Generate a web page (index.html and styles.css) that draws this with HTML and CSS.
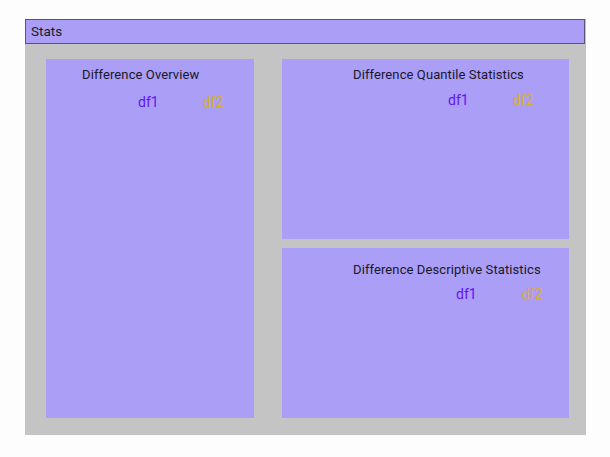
FILE: index.html
```html
<!DOCTYPE html>
<html lang="en">
<head>
    <meta charset="UTF-8">
    <meta name="viewport" content="width=device-width, initial-scale=1.0">
    <title>Stats</title>
    <link rel="stylesheet" href="styles.css">
</head>
<body>
    <div class="stats">
        <div class="stats-header">Stats</div>
        <div class="stats-body">
            <div class="panel panel-overview">
                <div class="panel-title">Difference Overview</div>
                <div class="legend">
                    <span class="df1">df1</span>
                    <span class="df2">df2</span>
                </div>
            </div>
            <div class="side">
                <div class="panel panel-quantile">
                    <div class="panel-title">Difference Quantile Statistics</div>
                    <div class="legend">
                        <span class="df1">df1</span>
                        <span class="df2">df2</span>
                    </div>
                </div>
                <div class="panel panel-descriptive">
                    <div class="panel-title">Difference Descriptive Statistics</div>
                    <div class="legend">
                        <span class="df1">df1</span>
                        <span class="df2">df2</span>
                    </div>
                </div>
            </div>
        </div>
    </div>
</body>
</html>
```

FILE: styles.css
```css
body {
    font-family: 'Roboto', 'Liberation Sans', sans-serif;
    margin: 0;
    padding: 17px 24px 0 25px;
    background: #fdfdfd;
    color: #222;
}
.stats {
    background: #c4c4c4;
    width: 561px;
}
.stats-header {
    margin: 2px 1px 0 0;
    background: #ab9ef7;
    border: 1px solid #5a5472;
    height: 23px;
    line-height: 23px;
    padding-left: 5px;
    font-size: 13.5px;
    color: #1a1a26;
}
.stats-body {
    display: grid;
    grid-template-columns: 208px 287px;
    column-gap: 28px;
    padding: 15px 17px 17px 21px;
}
.side {
    display: flex;
    flex-direction: column;
    gap: 9px;
}
.panel {
    background: #ab9ef7;
    box-sizing: border-box;
}
.panel-title {
    font-size: 13px;
    line-height: 16px;
    letter-spacing: 0.1px;
    color: #18182a;
    white-space: nowrap;
}
.legend {
    display: flex;
    font-size: 14px;
    line-height: 16px;
}
.df1 {
    color: #6214f0;
}
.df2 {
    color: #d9ad30;
}
.panel-overview {
    height: 359px;
    padding: 8px 0 0 36px;
}
.panel-overview .legend {
    margin: 11px 0 0 56px;
    gap: 44px;
}
.panel-quantile {
    height: 180px;
    padding: 8px 0 0 71px;
}
.panel-quantile .legend {
    margin: 9px 0 0 95px;
    gap: 44px;
}
.panel-descriptive {
    height: 170px;
    padding: 14px 0 0 71px;
}
.panel-descriptive .legend {
    margin: 8px 0 0 103px;
    gap: 45px;
}
```
